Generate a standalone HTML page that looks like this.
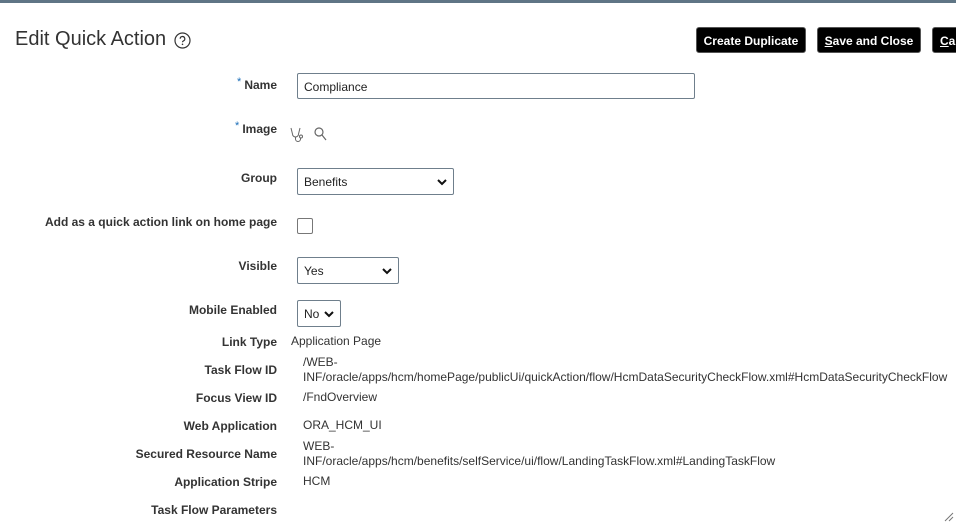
<!DOCTYPE html>
<html><head><meta charset="utf-8"><style>
body{margin:0;width:956px;height:524px;overflow:hidden;background:#fff;font-family:"Liberation Sans",Arial,sans-serif;color:#333;position:relative}
.a{position:absolute}
.top{left:0;top:0;width:956px;height:3px;background:#5f7585}
.t{left:15px;top:28px;font-size:20px;color:#333}
.btn{position:absolute;top:27px;height:26px;background:#000;color:#fff;font-weight:bold;font-size:12px;line-height:26px;text-align:center;border-radius:3px;border:1px solid #555;box-sizing:border-box}
.l{position:absolute;right:679px;font-size:12px;font-weight:bold;color:#333;white-space:nowrap}
.l i{font-style:normal;color:#1a6db8;font-size:11px;position:relative;top:-4px;margin-right:3px;font-weight:normal}
.v{position:absolute;font-size:12px;color:#333;line-height:15px}
.box{position:absolute;border:1px solid #6f7f8c;border-radius:2px;box-sizing:border-box;background:#fff;font-size:12px;color:#222}
.sel span{position:absolute;left:6px;top:6px}
.sel svg{position:absolute;right:6px;top:10px}
</style></head><body>
<div class="a top"></div>
<div class="a t">Edit Quick Action</div>
<svg class="a" style="left:174px;top:32px" width="17" height="17" viewBox="0 0 17 17"><circle cx="8.5" cy="8.5" r="7.5" fill="none" stroke="#333" stroke-width="1.2"/><path d="M6.2 6.8a2.3 2.3 0 1 1 3.2 2.1c-.7.3-.9.7-.9 1.4" fill="none" stroke="#333" stroke-width="1.2"/><circle cx="8.5" cy="12.3" r=".8" fill="#333"/></svg>
<div class="btn" style="left:696px;width:110px">Create Duplicate</div>
<div class="btn" style="left:817px;width:104px"><u>S</u>ave and Close</div>
<div class="btn" style="left:932px;width:40px;text-align:left;padding-left:7px"><u>C</u>ancel</div>

<div class="l" style="top:78px"><i>*</i>Name</div>
<div class="box" style="left:297px;top:73px;width:398px;height:26px"><span style="position:absolute;left:6px;top:6px">Compliance</span></div>

<div class="l" style="top:122px"><i>*</i>Image</div>
<svg class="a" style="left:289px;top:126px" width="18" height="18" viewBox="0 0 18 18" fill="none" stroke="#666" stroke-width="1"><path d="M2 2l1.5 6a3 3 0 0 0 6 0L11 2"/><path d="M6.5 11v2a2.5 2.5 0 0 0 5 0v-1"/><circle cx="12" cy="10.5" r="1.5"/></svg>
<svg class="a" style="left:313px;top:126px" width="16" height="18" viewBox="0 0 16 18" fill="none" stroke="#666" stroke-width="1.2"><circle cx="6" cy="6" r="4"/><path d="M9 9l4 5"/></svg>

<div class="l" style="top:171px">Group</div>
<div class="box sel" style="left:297px;top:168px;width:157px;height:27px"><span>Benefits</span><svg width="10" height="7" viewBox="0 0 10 7"><path d="M1 1l4 4 4-4" fill="none" stroke="#111" stroke-width="2"/></svg></div>

<div class="l" style="top:215px">Add as a quick action link on home page</div>
<div class="box" style="left:297px;top:218px;width:16px;height:16px;border-color:#777"></div>

<div class="l" style="top:259px">Visible</div>
<div class="box sel" style="left:297px;top:257px;width:102px;height:27px"><span>Yes</span><svg width="10" height="7" viewBox="0 0 10 7"><path d="M1 1l4 4 4-4" fill="none" stroke="#111" stroke-width="2"/></svg></div>

<div class="l" style="top:303px">Mobile Enabled</div>
<div class="box sel" style="left:297px;top:300px;width:44px;height:27px"><span>No</span><svg width="10" height="7" viewBox="0 0 10 7"><path d="M1 1l4 4 4-4" fill="none" stroke="#111" stroke-width="2"/></svg></div>

<div class="l" style="top:335px">Link Type</div>
<div class="v" style="left:291px;top:334px">Application Page</div>
<div class="l" style="top:363px">Task Flow ID</div>
<div class="v" style="left:303px;top:355px">/WEB-<br>INF/oracle/apps/hcm/homePage/publicUi/quickAction/flow/HcmDataSecurityCheckFlow.xml#HcmDataSecurityCheckFlow</div>
<div class="l" style="top:391px">Focus View ID</div>
<div class="v" style="left:303px;top:390px">/FndOverview</div>
<div class="l" style="top:419px">Web Application</div>
<div class="v" style="left:303px;top:418px">ORA_HCM_UI</div>
<div class="l" style="top:447px">Secured Resource Name</div>
<div class="v" style="left:303px;top:439px">WEB-<br>INF/oracle/apps/hcm/benefits/selfService/ui/flow/LandingTaskFlow.xml#LandingTaskFlow</div>
<div class="l" style="top:475px">Application Stripe</div>
<div class="v" style="left:303px;top:474px">HCM</div>
<div class="l" style="top:503px">Task Flow Parameters</div>
<svg class="a" style="left:944px;top:512px" width="10" height="10" viewBox="0 0 10 10" stroke="#777" stroke-width="1"><path d="M1 9L9 1M5 9L9 5"/></svg>
</body></html>
